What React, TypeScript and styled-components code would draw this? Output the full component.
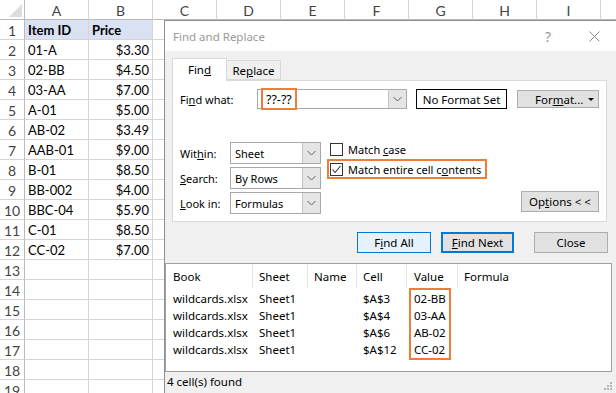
import React from "react";
import styled, { createGlobalStyle } from "styled-components";

const Global = createGlobalStyle`
  html, body { margin: 0; padding: 0; background: #fff; }
  body { width: 616px; height: 393px; overflow: hidden; }
`;

const Screen = styled.div`
  position: relative;
  width: 616px;
  height: 393px;
  overflow: hidden;
  background: #fff;
`;

/* ---------- spreadsheet ---------- */
const Sheet = styled.div`
  display: grid;
  grid-template-columns: 25px repeat(10, 64px);
  grid-template-rows: 20px;
  grid-auto-rows: 20px;
  font-family: Lato, "Liberation Sans", sans-serif;
`;

type Kind = "corner" | "col" | "row" | "data";

const Cell = styled.div<{ $kind: Kind; $head?: boolean; $right?: boolean }>`
  box-sizing: border-box;
  position: relative;
  display: flex;
  align-items: center;
  justify-content: ${(p) =>
    p.$kind === "col" || p.$kind === "row" ? "center" : p.$right ? "flex-end" : "flex-start"};
  padding: ${(p) => (p.$kind === "data" ? "1px 3px 0 3px" : "1px 0 0 0")};
  border-right: 1px solid ${(p) => (p.$kind === "row" || p.$kind === "corner" ? "#b9b9b9" : "#d4d4d4")};
  border-bottom: 1px solid ${(p) => (p.$kind === "col" || p.$kind === "corner" ? "#b9b9b9" : "#d4d4d4")};
  background: ${(p) => (p.$head ? "#d9e1f2" : "#fff")};
  color: ${(p) => (p.$kind === "data" ? "#000" : "#444")};
  font-size: ${(p) => (p.$kind === "data" ? "13px" : "14px")};
  font-weight: ${(p) => (p.$head ? 700 : 400)};
  white-space: nowrap;
  overflow: hidden;
`;

const CornerMark = styled.svg`
  position: absolute;
  right: 2px;
  bottom: 2px;
`;

/* ---------- dialog ---------- */
const Dialog = styled.div`
  position: absolute;
  left: 164px;
  top: 20px;
  width: 454px;
  height: 380px;
  box-sizing: border-box;
  border: 1px solid #8f8f8f;
  background: #f0f0f0;
  display: flex;
  flex-direction: column;
  font-family: "Noto Sans", "Liberation Sans", sans-serif;
  font-size: 11px;
  color: #000;
`;

const TitleBar = styled.div`
  height: 30px;
  flex: none;
  background: #fff;
  display: flex;
  align-items: center;
  padding-left: 8px;
`;

const TitleText = styled.div`
  color: #999;
  font-size: 11.5px;
  flex: 1;
`;

const TitleButton = styled.div`
  width: 46px;
  height: 30px;
  display: flex;
  align-items: center;
  justify-content: center;
  color: #9a9a9a;
  font-size: 14px;
`;

const Body = styled.div`
  padding: 7px 9px 0 7px;
  display: flex;
  flex-direction: column;
`;

const Tabs = styled.div`
  display: flex;
  align-items: flex-end;
  height: 22px;
  position: relative;
  z-index: 1;
`;

const Tab = styled.div<{ $active?: boolean }>`
  box-sizing: border-box;
  width: ${(p) => (p.$active ? "55px" : "54px")};
  height: ${(p) => (p.$active ? "23px" : "20px")};
  margin-bottom: ${(p) => (p.$active ? "-1px" : "0")};
  border: 1px solid #d9d9d9;
  border-bottom: ${(p) => (p.$active ? "none" : "1px solid #d9d9d9")};
  border-left: ${(p) => (p.$active ? "1px solid #d9d9d9" : "none")};
  background: ${(p) => (p.$active ? "#fff" : "#f0f0f0")};
  display: flex;
  align-items: center;
  justify-content: center;
  font-size: 11.5px;
  padding-bottom: ${(p) => (p.$active ? "2px" : "0")};
`;

const Panel = styled.div`
  box-sizing: border-box;
  width: 435px;
  height: 142px;
  border: 1px solid #d9d9d9;
  background: #fff;
  padding: 8px 7px 7px 7px;
  display: flex;
  flex-direction: column;
`;

const FindRow = styled.div`
  display: flex;
  align-items: center;
  height: 20px;
`;

const Label = styled.div<{ $w: number }>`
  width: ${(p) => p.$w}px;
  flex: none;
  white-space: nowrap;
`;

const Key = styled.span`
  text-decoration: underline;
  text-underline-offset: 1px;
`;

const Combo = styled.div<{ $w: number; $h: number }>`
  box-sizing: border-box;
  width: ${(p) => p.$w}px;
  height: ${(p) => p.$h}px;
  flex: none;
  border: 1px solid #a8a8a8;
  background: #fff;
  display: flex;
  align-items: stretch;
`;

const ComboText = styled.div`
  flex: 1;
  display: flex;
  align-items: center;
  padding-left: 4px;
  white-space: nowrap;
`;

const MarkedText = styled.div`
  box-sizing: border-box;
  margin: -2px 0 -2px -1px;
  border: 2px solid #f07c3a;
  padding: 0 3px 0 3px;
  display: flex;
  align-items: center;
  height: 22px;
  font-size: 12.5px;
`;

const ComboArrow = styled.div`
  width: 17px;
  flex: none;
  background: #e5e5e5;
  border-left: 1px solid #c4c4c4;
  display: flex;
  align-items: center;
  justify-content: center;
`;

const FormatBox = styled.div`
  box-sizing: border-box;
  width: 91px;
  height: 20px;
  margin-left: 9px;
  border: 1px solid #000;
  background: #fff;
  display: flex;
  align-items: center;
  justify-content: center;
  font-size: 11.5px;
`;

const Button = styled.div<{ $w: number; $h?: number; $variant?: "normal" | "hover" | "default" }>`
  box-sizing: border-box;
  width: ${(p) => p.$w}px;
  height: ${(p) => p.$h ?? 21}px;
  flex: none;
  border: ${(p) =>
    p.$variant === "default"
      ? "2px solid #0078d7"
      : p.$variant === "hover"
      ? "1px solid #0078d7"
      : "1px solid #adadad"};
  background: ${(p) => (p.$variant === "hover" ? "#e5f1fb" : "#e1e1e1")};
  display: flex;
  align-items: center;
  justify-content: center;
  font-size: 11.5px;
  white-space: nowrap;
`;

const FormatButton = styled(Button)`
  margin-left: 10px;
  justify-content: flex-start;
  padding: 0 4px 0 17px;
`;

const DropTri = styled.span`
  margin-left: auto;
  width: 0;
  height: 0;
  border-left: 3px solid transparent;
  border-right: 3px solid transparent;
  border-top: 3px solid #000;
`;

const Lower = styled.div`
  display: flex;
  margin-top: 33px;
  flex: 1;
`;

const SelectCol = styled.div`
  display: flex;
  flex-direction: column;
  gap: 3px;
`;

const SelectRow = styled.div`
  display: flex;
  align-items: center;
  height: 22px;
`;

const CheckCol = styled.div`
  display: flex;
  flex-direction: column;
  margin-left: 6px;
  margin-top: -2px;
`;

const CheckRow = styled.div<{ $marked?: boolean }>`
  box-sizing: border-box;
  height: ${(p) => (p.$marked ? 20 : 19)}px;
  display: flex;
  align-items: center;
  gap: 5px;
  padding: 0 4px 0 ${(p) => (p.$marked ? 1 : 3)}px;
  border: ${(p) => (p.$marked ? "2px solid #f07c3a" : "none")};
  white-space: nowrap;
  font-size: 11px;
`;

const Box = styled.div`
  box-sizing: border-box;
  width: 13px;
  height: 13px;
  border: 1px solid #333;
  background: #fff;
  display: flex;
  align-items: center;
  justify-content: center;
`;

const OptionsButton = styled(Button)`
  margin-left: auto;
  align-self: flex-end;
  margin-bottom: 2px;
`;

const Actions = styled.div`
  display: flex;
  justify-content: flex-end;
  gap: 10px;
  margin-top: 10px;
`;

const CloseButton = styled(Button)`
  margin-left: 10px;
`;

const Results = styled.div`
  box-sizing: border-box;
  margin: 10px 5px 0 0;
  height: 109px;
  border: 1px solid #a0a0a0;
  background: #fff;
  display: flex;
`;

const ResCol = styled.div<{ $w?: number }>`
  width: ${(p) => (p.$w ? `${p.$w}px` : "auto")};
  flex: ${(p) => (p.$w ? "none" : "1")};
  display: flex;
  flex-direction: column;
`;

const ResHead = styled.div<{ $pad: number; $last?: boolean }>`
  box-sizing: border-box;
  height: 24px;
  display: flex;
  align-items: center;
  padding-left: ${(p) => p.$pad}px;
  border-right: ${(p) => (p.$last ? "none" : "1px solid #e5e5e5")};
  font-size: 11.5px;
`;

const ResCells = styled.div`
  padding-top: 2px;
  display: flex;
  flex-direction: column;
`;

const ResCell = styled.div<{ $pad: number }>`
  height: 17px;
  display: flex;
  align-items: center;
  padding-left: ${(p) => p.$pad}px;
  white-space: nowrap;
  font-size: 11.5px;
`;

const ValueBox = styled.div`
  box-sizing: border-box;
  margin-left: 2px;
  width: 42px;
  border: 2px solid #f07c3a;
  display: flex;
  flex-direction: column;
`;

const Status = styled.div`
  height: 18px;
  display: flex;
  align-items: center;
  padding-left: 2px;
  position: relative;
  font-size: 11.5px;
`;

const Grip = styled.svg`
  position: absolute;
  right: 5px;
  bottom: -1px;
`;

const Chevron = () => (
  <svg width="9" height="6" viewBox="0 0 9 6">
    <polyline points="0.5,1 4.5,5 8.5,1" fill="none" stroke="#606060" strokeWidth="1" />
  </svg>
);

const sheetRows: [string, string][] = [
  ["Item ID", "Price"],
  ["01-A", "$3.30"],
  ["02-BB", "$4.50"],
  ["03-AA", "$7.00"],
  ["A-01", "$5.00"],
  ["AB-02", "$3.49"],
  ["AAB-01", "$9.00"],
  ["B-01", "$8.50"],
  ["BB-002", "$4.00"],
  ["BBC-04", "$5.90"],
  ["C-01", "$8.50"],
  ["CC-02", "$7.00"],
];

const letters = ["A", "B", "C", "D", "E", "F", "G", "H", "I", "J"];

const results = [
  ["wildcards.xlsx", "Sheet1", "", "$A$3", "02-BB"],
  ["wildcards.xlsx", "Sheet1", "", "$A$4", "03-AA"],
  ["wildcards.xlsx", "Sheet1", "", "$A$6", "AB-02"],
  ["wildcards.xlsx", "Sheet1", "", "$A$12", "CC-02"],
];

const resCols = [
  { name: "Book", w: 87, pad: 7 },
  { name: "Sheet", w: 55, pad: 6 },
  { name: "Name", w: 49, pad: 6 },
  { name: "Cell", w: 50, pad: 6 },
];

export default function App() {
  const cells: React.ReactNode[] = [];
  cells.push(
    <Cell key="corner" $kind="corner">
      <CornerMark width="13" height="13" viewBox="0 0 13 13">
        <polygon points="13,0 13,13 0,13" fill="#dcdcdc" />
      </CornerMark>
    </Cell>
  );
  letters.forEach((l) =>
    cells.push(
      <Cell key={`h${l}`} $kind="col">
        {l}
      </Cell>
    )
  );
  for (let r = 1; r <= 19; r++) {
    cells.push(
      <Cell key={`r${r}`} $kind="row">
        {r}
      </Cell>
    );
    const data = sheetRows[r - 1];
    letters.forEach((l, ci) => {
      const val = data && ci < 2 ? data[ci] : "";
      cells.push(
        <Cell key={`c${r}${l}`} $kind="data" $head={r === 1 && ci < 2} $right={ci === 1 && r > 1}>
          {val}
        </Cell>
      );
    });
  }

  return (
    <Screen>
      <Global />
      <Sheet>{cells}</Sheet>

      <Dialog>
        <TitleBar>
          <TitleText>Find and Replace</TitleText>
          <TitleButton>?</TitleButton>
          <TitleButton>
            <svg width="11" height="11" viewBox="0 0 11 11">
              <path d="M0.5 0.5 L10.5 10.5 M10.5 0.5 L0.5 10.5" stroke="#8a8a8a" strokeWidth="1" />
            </svg>
          </TitleButton>
        </TitleBar>

        <Body>
          <Tabs>
            <Tab $active>
              Fin<Key>d</Key>
            </Tab>
            <Tab>
              Re<Key>p</Key>lace
            </Tab>
          </Tabs>
          <Panel>
            <FindRow>
              <Label $w={77}>
                Fi<Key>n</Key>d what:
              </Label>
              <Combo $w={150} $h={20}>
                <ComboText>
                  <MarkedText>??-??</MarkedText>
                </ComboText>
                <ComboArrow>
                  <Chevron />
                </ComboArrow>
              </Combo>
              <FormatBox>No Format Set</FormatBox>
              <FormatButton $w={82} $h={18}>
                For<Key>m</Key>at...
                <DropTri />
              </FormatButton>
            </FindRow>

            <Lower>
              <SelectCol>
                <SelectRow>
                  <Label $w={50}>
                    Wit<Key>h</Key>in:
                  </Label>
                  <Combo $w={91} $h={22}>
                    <ComboText>Sheet</ComboText>
                    <ComboArrow>
                      <Chevron />
                    </ComboArrow>
                  </Combo>
                </SelectRow>
                <SelectRow>
                  <Label $w={50}>
                    <Key>S</Key>earch:
                  </Label>
                  <Combo $w={91} $h={22}>
                    <ComboText>By Rows</ComboText>
                    <ComboArrow>
                      <Chevron />
                    </ComboArrow>
                  </Combo>
                </SelectRow>
                <SelectRow>
                  <Label $w={50}>
                    <Key>L</Key>ook in:
                  </Label>
                  <Combo $w={91} $h={22}>
                    <ComboText>Formulas</ComboText>
                    <ComboArrow>
                      <Chevron />
                    </ComboArrow>
                  </Combo>
                </SelectRow>
              </SelectCol>

              <CheckCol>
                <CheckRow>
                  <Box />
                  <span>
                    Match <Key>c</Key>ase
                  </span>
                </CheckRow>
                <CheckRow $marked>
                  <Box>
                    <svg width="11" height="11" viewBox="0 0 11 11">
                      <polyline points="1.5,5.5 4,8.5 9.5,2" fill="none" stroke="#333" strokeWidth="1.1" />
                    </svg>
                  </Box>
                  <span>
                    Match entire cell c<Key>o</Key>ntents
                  </span>
                </CheckRow>
              </CheckCol>

              <OptionsButton $w={78}>
                Op<Key>t</Key>ions &lt; &lt;
              </OptionsButton>
            </Lower>
          </Panel>

          <Actions>
            <Button $w={74} $variant="hover">
              F<Key>i</Key>nd All
            </Button>
            <Button $w={73} $variant="default">
              <Key>F</Key>ind Next
            </Button>
            <CloseButton $w={74}>Close</CloseButton>
          </Actions>
        </Body>

        <Results>
          {resCols.map((c, ci) => (
            <ResCol key={c.name} $w={c.w}>
              <ResHead $pad={c.pad}>{c.name}</ResHead>
              <ResCells>
                {results.map((r, ri) => (
                  <ResCell key={ri} $pad={c.pad}>
                    {r[ci]}
                  </ResCell>
                ))}
              </ResCells>
            </ResCol>
          ))}
          <ResCol $w={51}>
            <ResHead $pad={7}>Value</ResHead>
            <ValueBox>
              {results.map((r, ri) => (
                <ResCell key={ri} $pad={3}>
                  {r[4]}
                </ResCell>
              ))}
            </ValueBox>
          </ResCol>
          <ResCol>
            <ResHead $pad={6} $last>
              Formula
            </ResHead>
          </ResCol>
        </Results>

        <Status>
          4 cell(s) found
          <Grip width="10" height="10" viewBox="0 0 10 10">
            {[
              [8, 0],
              [8, 3],
              [5, 3],
              [8, 6],
              [5, 6],
              [2, 6],
            ].map(([x, y], i) => (
              <rect key={i} x={x} y={y + 1} width="2" height="2" fill="#b5b5b5" />
            ))}
          </Grip>
        </Status>
      </Dialog>
    </Screen>
  );
}
